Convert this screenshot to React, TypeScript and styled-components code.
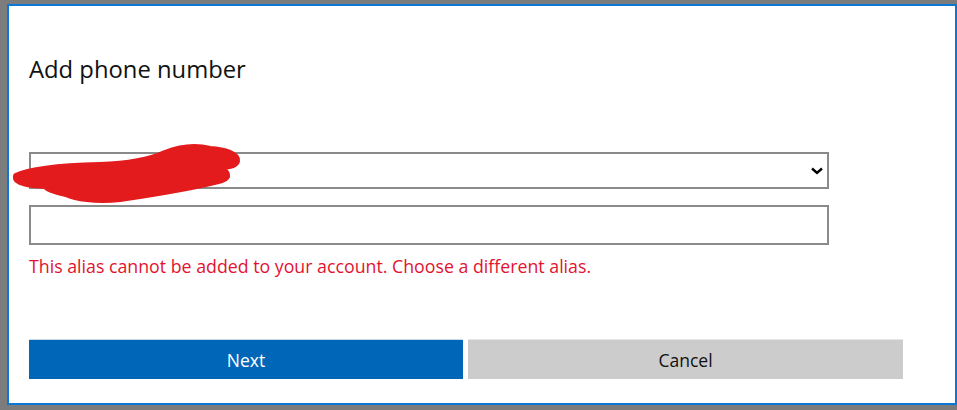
import { createGlobalStyle, styled } from "styled-components";

const GlobalStyle = createGlobalStyle`
  html, body {
    margin: 0;
    padding: 0;
    background: #7c7c7c;
    height: 100%;
    overflow: hidden;
  }
  body {
    font-family: "Open Sans", "Noto Sans", "Liberation Sans", sans-serif;
  }
`;

const Page = styled.div`
  padding: 4px 0 0 7px;
  position: relative;
`;

const Dialog = styled.div`
  box-sizing: border-box;
  width: 950px;
  height: 401px;
  background: #ffffff;
  border: 2px solid #0a78d4;
  padding: 47px 0 0 20px;
  display: flex;
  flex-direction: column;
`;

const Title = styled.h1`
  margin: 0;
  font-size: 23.8px;
  font-weight: 400;
  color: #111;
  line-height: 32px;
`;

const Fields = styled.div`
  margin-top: 67px;
  display: flex;
  flex-direction: column;
  gap: 16px;
  width: 800px;
`;

const SelectBox = styled.div`
  box-sizing: border-box;
  height: 37px;
  border: 2px solid #8a8a8a;
  display: flex;
  align-items: center;
  justify-content: flex-end;
  padding-right: 3px;
`;

const TextBox = styled.input`
  box-sizing: border-box;
  height: 40px;
  border: 2px solid #8a8a8a;
  outline: none;
  margin: 0;
  padding: 0 8px;
  font: inherit;
`;

const ErrorText = styled.p`
  margin: 9px 0 0;
  color: #e2132f;
  font-size: 17.75px;
  line-height: 24px;
`;

const Buttons = styled.div`
  margin-top: 61px;
  display: flex;
  gap: 5px;
`;

const Button = styled.button<{ $primary?: boolean }>`
  width: ${(p) => (p.$primary ? "434px" : "435px")};
  height: 40px;
  border: none;
  border-top: 1px solid ${(p) => (p.$primary ? "#c8dcee" : "#e6e6e6")};
  margin: 0;
  padding: 0;
  font-family: inherit;
  font-size: 17.5px;
  color: ${(p) => (p.$primary ? "#ffffff" : "#111111")};
  background: ${(p) => (p.$primary ? "#0067b8" : "#cccccc")};
`;

const Scribble = styled.svg`
  position: absolute;
  left: 0;
  top: 0;
  pointer-events: none;
`;

const Chevron = () => (
  <svg width="14" height="10" viewBox="0 0 14 10">
    <path d="M2 2.5 L7 7 L12 2.5" fill="none" stroke="#000" strokeWidth="2.4" />
  </svg>
);

export default function App() {
  return (
    <>
      <GlobalStyle />
      <Page>
        <Dialog>
          <Title>Add phone number</Title>
          <Fields>
            <SelectBox>
              <Chevron />
            </SelectBox>
            <TextBox type="text" />
          </Fields>
          <ErrorText>This alias cannot be added to your account. Choose a different alias.</ErrorText>
          <Buttons>
            <Button $primary>Next</Button>
            <Button>Cancel</Button>
          </Buttons>
        </Dialog>
        <Scribble width="260" height="220" viewBox="0 0 260 220">
          <path
            d="M16 176 C30 169 60 166 100 165 C130 164 150 160 165 153 C180 147 195 145 210 149 C225 150 238 154 237 161 C236 166 228 166 220 168 C228 172 230 177 222 180 C200 186 160 193 120 199 C95 202 75 198 66 194 C55 192 45 188 46 186 C30 185 14 183 16 176 Z"
            fill="#e31b1d"
            stroke="#e31b1d"
            strokeWidth="6"
            strokeLinejoin="round"
          />
        </Scribble>
      </Page>
    </>
  );
}
